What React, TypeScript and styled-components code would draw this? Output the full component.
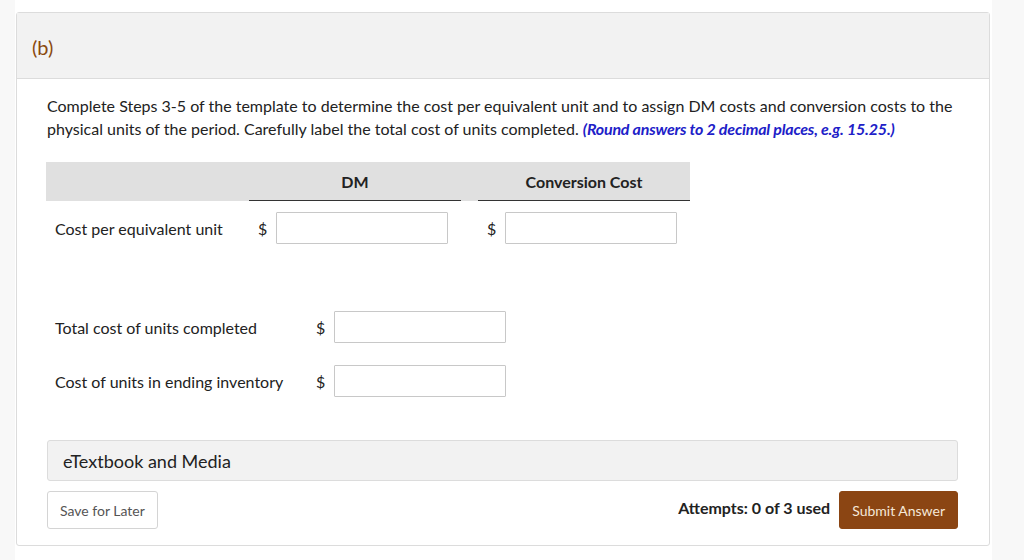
import styled, { createGlobalStyle } from 'styled-components'

const Global = createGlobalStyle`
  html, body {
    margin: 0;
    padding: 0;
    background: #fff;
  }
  body {
    font-family: Lato, "Open Sans", sans-serif;
    color: #222;
  }
`

const Page = styled.div`
  display: flex;
  height: 560px;
  overflow: hidden;
`

const SideStrip = styled.div<{ $w: number }>`
  width: ${p => p.$w}px;
  flex-shrink: 0;
  background: #f8f8f8;
`

const Main = styled.div`
  flex: 1;
  padding: 12px 2px 0 1px;
`

const Card = styled.section`
  border: 1px solid #dcdcdc;
  border-radius: 3px;
  height: 534px;
  box-sizing: border-box;
  display: flex;
  flex-direction: column;
`

const CardHeader = styled.header`
  height: 66px;
  flex-shrink: 0;
  background: #f2f2f2;
  border-bottom: 1px solid #dcdcdc;
  display: flex;
  align-items: center;
  padding-left: 15px;
  padding-top: 2px;
  box-sizing: border-box;
  font-size: 20px;
  color: #8a4a0f;
`

const CardBody = styled.div`
  flex: 1;
  padding: 15px 31px 0 30px;
  display: flex;
  flex-direction: column;
`

const Prompt = styled.p`
  margin: 0;
  font-size: 16px;
  line-height: 23px;
  color: #222;
`

const Hint = styled.em`
  font-weight: 700;
  color: #2020c8;
  letter-spacing: -0.2px;
`

const Grid = styled.div<{ $label: number }>`
  display: grid;
  grid-template-columns: ${p => p.$label}px 212px 212px;
  column-gap: 17px;
  width: 644px;
  margin-left: -1px;
`

const HeadRow = styled(Grid)`
  background: #e0e0e0;
  height: 39px;
  margin-top: 22px;
`

const HeadCell = styled.div`
  display: flex;
  align-items: center;
  justify-content: center;
  font-weight: 700;
  font-size: 16px;
  color: #222;
  border-bottom: 1.5px solid #333;
  padding-top: 1px;
  box-sizing: border-box;
`

const Row = styled(Grid)<{ $top: number }>`
  margin-top: ${p => p.$top}px;
  height: 32px;
  align-items: center;
`

const Label = styled.div`
  padding-left: 9px;
  font-size: 16px;
  color: #222;
`

const MoneyCell = styled.div`
  display: flex;
  align-items: center;
  padding-left: 9px;
`

const Dollar = styled.span`
  width: 18px;
  font-size: 16px;
  color: #222;
`

const Field = styled.input`
  width: 172px;
  height: 32px;
  box-sizing: border-box;
  border: 1px solid #c8c8c8;
  border-radius: 1px;
  background: #fff;
  outline: none;
  padding: 0 6px;
  font: inherit;
`

const MediaBar = styled.div`
  margin-top: 43px;
  height: 41px;
  background: #f2f2f2;
  border: 1px solid #dcdcdc;
  border-radius: 3px;
  box-sizing: border-box;
  display: flex;
  align-items: center;
  padding-left: 15px;
  font-size: 18px;
  color: #222;
`

const Footer = styled.div`
  margin-top: 10px;
  display: flex;
  align-items: center;
`

const Attempts = styled.span`
  margin-left: auto;
  margin-right: 9px;
  margin-top: -5px;
  font-weight: 700;
  font-size: 16px;
  color: #222;
`

const Button = styled.button<{ $primary?: boolean }>`
  height: 38px;
  padding: 0 12px;
  border-radius: 3px;
  font-family: Lato, sans-serif;
  font-size: 14px;
  border: 1px solid ${p => (p.$primary ? '#8b4513' : '#d4d4d4')};
  background: ${p => (p.$primary ? '#8b4513' : '#fff')};
  color: ${p => (p.$primary ? '#f6e8d8' : '#555')};
`

const lowerRows = [
  { label: 'Total cost of units completed', top: 67 },
  { label: 'Cost of units in ending inventory', top: 22 },
]

export default function App() {
  return (
    <Page>
      <Global />
      <SideStrip $w={15} />
      <Main>
        <Card>
          <CardHeader>(b)</CardHeader>
          <CardBody>
            <Prompt>
              Complete Steps 3-5 of the template to determine the cost per equivalent unit and to assign DM costs and
              conversion costs to the physical units of the period. Carefully label the total cost of units
              completed. <Hint>(Round answers to 2 decimal places, e.g. 15.25.)</Hint>
            </Prompt>

            <HeadRow $label={186}>
              <div />
              <HeadCell>DM</HeadCell>
              <HeadCell>Conversion Cost</HeadCell>
            </HeadRow>
            <Row $label={186} $top={11}>
              <Label>Cost per equivalent unit</Label>
              <MoneyCell>
                <Dollar>$</Dollar>
                <Field />
              </MoneyCell>
              <MoneyCell>
                <Dollar>$</Dollar>
                <Field />
              </MoneyCell>
            </Row>

            {lowerRows.map(r => (
              <Row key={r.label} $label={244} $top={r.top}>
                <Label>{r.label}</Label>
                <MoneyCell>
                  <Dollar>$</Dollar>
                  <Field />
                </MoneyCell>
              </Row>
            ))}

            <MediaBar>eTextbook and Media</MediaBar>
            <Footer>
              <Button>Save for Later</Button>
              <Attempts>Attempts: 0 of 3 used</Attempts>
              <Button $primary>Submit Answer</Button>
            </Footer>
          </CardBody>
        </Card>
      </Main>
      <SideStrip $w={32} />
    </Page>
  )
}
